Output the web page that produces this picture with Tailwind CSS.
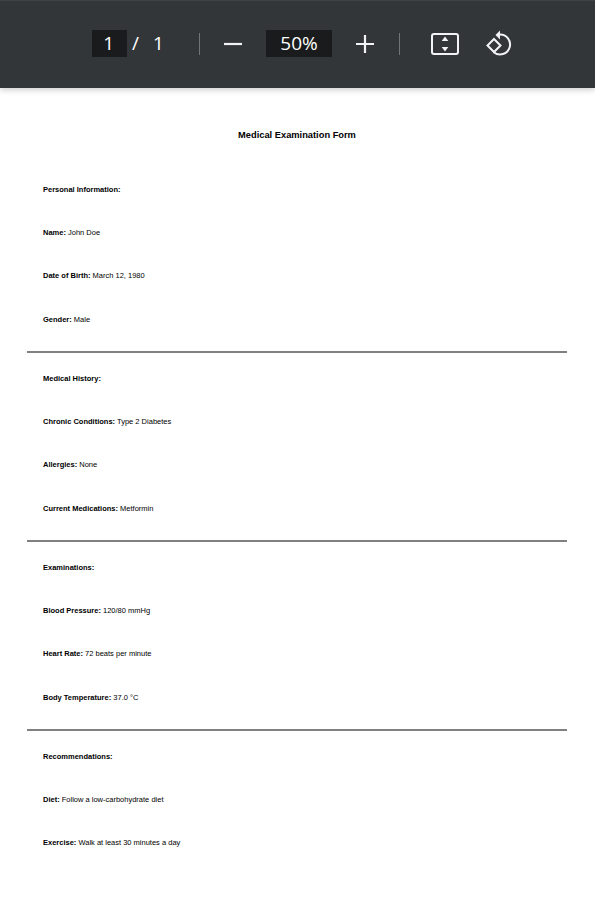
<!DOCTYPE html>
<html lang="en">
<head>
<meta charset="UTF-8">
<meta name="viewport" content="width=device-width, initial-scale=1">
<title>Medical Examination Form</title>
<script src="https://cdn.jsdelivr.net/npm/@tailwindcss/browser@4"></script>
</head>
<body class="bg-white w-[595px] h-[915px] overflow-hidden font-['Liberation_Sans',Arial,sans-serif]">

<!-- pdf viewer toolbar -->
<div class="relative z-10 h-[88px] bg-[#323639] border-t border-[#3f4346] shadow-[0_2px_6px_rgba(0,0,0,0.2)] flex items-center pl-[92px] pb-[2px] text-white font-['Open_Sans',sans-serif] text-[19px]">
  <div class="w-[35px] h-[27px] bg-[#191b1c] flex items-center justify-end pr-[13px]">1</div>
  <span class="ml-[5px] w-[10px]">/</span>
  <span class="ml-[11px] w-[10px]">1</span>
  <div class="ml-[36px] w-px h-[22px] bg-[#70747a]"></div>
  <svg class="ml-[23px]" width="20" height="20" viewBox="0 0 20 20"><path d="M1 10h18" stroke="#f1f3f4" stroke-width="2.200"/></svg>
  <div class="ml-[23px] w-[66px] h-[27px] bg-[#191b1c] flex items-center justify-center">50%</div>
  <svg class="ml-[23px]" width="20" height="20" viewBox="0 0 20 20"><path d="M1 10h18M10 1v18" stroke="#f1f3f4" stroke-width="2.200" fill="none"/></svg>
  <div class="ml-[24px] w-px h-[22px] bg-[#70747a]"></div>
  <svg class="ml-[31px]" width="28" height="24" viewBox="0 0 28 24" fill="none"><rect x="1" y="2" width="26" height="20" rx="2" stroke="#f1f3f4" stroke-width="2"/><path d="M14 4.500l3.300 4.500h-6.600zM14 19.500l-3.300-4.500h6.600z" fill="#f1f3f4"/></svg>
  <svg class="ml-[26px]" width="28" height="28" viewBox="0 0 28 28" fill="none"><path d="M14 4.500A10 10 0 1 1 8.500 22" stroke="#f1f3f4" stroke-width="2"/><path d="M15 .5v9l-4.500-4.500z" fill="#f1f3f4"/><path d="M9 9l6.500 6.500-6.500 6.500-6.500-6.500z" stroke="#f1f3f4" stroke-width="2"/></svg>
</div>

<!-- document page -->
<main class="text-black">
  <h1 class="h-[92px] pt-[41px] pr-[1px] text-center text-[9.3px] leading-[12px] font-bold">Medical Examination Form</h1>

  <section class="h-[173px] ml-[27px] mr-[28px] pl-[16px] border-b-2 border-[#808080] text-[7.5px] leading-[10px] pt-[0.7px]">
    <p class="h-[43.3px] pt-[4px] font-bold">Personal Information:</p>
    <p class="h-[43.3px] pt-[4px]"><b>Name:</b> John Doe</p>
    <p class="h-[43.3px] pt-[4px]"><b>Date of Birth:</b> March 12, 1980</p>
    <p class="h-[43.3px] pt-[4px]"><b>Gender:</b> Male</p>
  </section>

  <section class="h-[189px] ml-[27px] mr-[28px] pl-[16px] border-b-2 border-[#808080] text-[7.5px] leading-[10px] pt-[20.7px]">
    <p class="h-[43.3px] font-bold">Medical History:</p>
    <p class="h-[43.3px]"><b>Chronic Conditions:</b> Type 2 Diabetes</p>
    <p class="h-[43.3px]"><b>Allergies:</b> None</p>
    <p class="h-[43.3px]"><b>Current Medications:</b> Metformin</p>
  </section>

  <section class="h-[189px] ml-[27px] mr-[28px] pl-[16px] border-b-2 border-[#808080] text-[7.5px] leading-[10px] pt-[20.7px]">
    <p class="h-[43.3px] font-bold">Examinations:</p>
    <p class="h-[43.3px]"><b>Blood Pressure:</b> 120/80 mmHg</p>
    <p class="h-[43.3px]"><b>Heart Rate:</b> 72 beats per minute</p>
    <p class="h-[43.3px]"><b>Body Temperature:</b> 37.0 °C</p>
  </section>

  <section class="ml-[27px] mr-[28px] pl-[16px] text-[7.5px] leading-[10px] pt-[20.7px]">
    <p class="h-[43.3px] font-bold">Recommendations:</p>
    <p class="h-[43.3px]"><b>Diet:</b> Follow a low-carbohydrate diet</p>
    <p class="h-[43.3px]"><b>Exercise:</b> Walk at least 30 minutes a day</p>
  </section>
</main>
</body>
</html>
